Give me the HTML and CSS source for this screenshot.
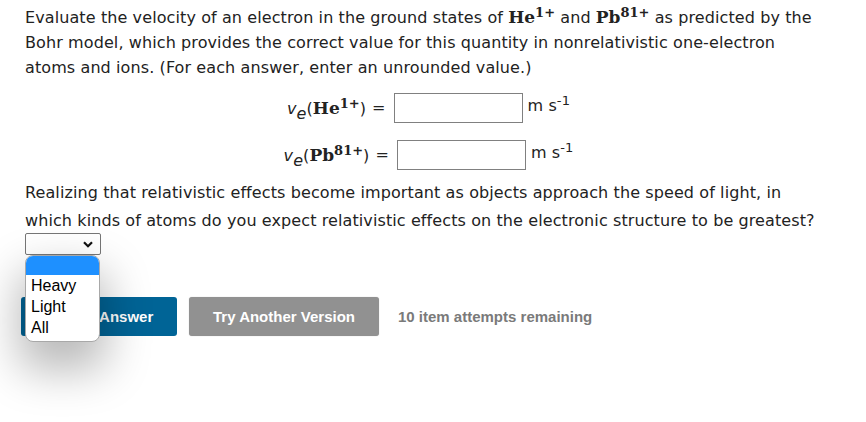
FILE: index.html
```html
<!DOCTYPE html>
<html>
<head>
<meta charset="utf-8">
<link rel="stylesheet" href="styles.css">
</head>
<body>
<div class="page">
  <p class="para">Evaluate the velocity of an electron in the ground states of <b class="chem">He<sup>1+</sup></b> and <b class="chem">Pb<sup>81+</sup></b> as predicted by the Bohr model, which provides the correct value for this quantity in nonrelativistic one-electron atoms and ions. (For each answer, enter an unrounded value.)</p>

  <div class="eqs">
    <div class="eq eq1">
      <span class="lhs"><i>v</i><sub><i>e</i></sub>(<b class="chem">He<sup>1+</sup></b>)</span>
      <span class="equals">=</span>
      <span class="box"></span>
      <span class="unit">m s<sup>-1</sup></span>
    </div>
    <div class="eq eq2">
      <span class="lhs"><i>v</i><sub><i>e</i></sub>(<b class="chem">Pb<sup>81+</sup></b>)</span>
      <span class="equals">=</span>
      <span class="box"></span>
      <span class="unit">m s<sup>-1</sup></span>
    </div>
  </div>

  <p class="para para2">Realizing that relativistic effects become important as objects approach the speed of light, in which kinds of atoms do you expect relativistic effects on the electronic structure to be greatest?</p>

  <div class="selectwrap">
    <div class="select">
      <svg class="chev" width="10" height="7" viewBox="0 0 10 7"><path d="M1 1.2 L5 5.2 L9 1.2" fill="none" stroke="#111" stroke-width="2.2"/></svg>
    </div>
    <div class="menu">
      <div class="opt sel"></div>
      <div class="opt">Heavy</div>
      <div class="opt">Light</div>
      <div class="opt">All</div>
    </div>
  </div>

  <div class="actions">
    <button class="btn submit">Submit Answer</button>
    <button class="btn another">Try Another Version</button>
    <span class="attempts">10 item attempts remaining</span>
  </div>
</div>
</body>
</html>
```

FILE: styles.css
```css
html, body {
  margin: 0;
  padding: 0;
  background: #fff;
}
body {
  min-height: 422px;
}
.page {
  padding: 5px 44px 0 25px;
  font-family: "DejaVu Sans", Verdana, sans-serif;
  font-size: 16px;
  letter-spacing: 0.1px;
  color: #222;
}
.para {
  margin: 0;
  line-height: 25px;
}
.chem {
  font-family: "DejaVu Serif", serif;
  font-weight: bold;
  font-size: 17px;
  letter-spacing: 0;
}
.chem sup {
  font-size: 13px;
  vertical-align: 6px;
  line-height: 0;
}
.eqs {
  display: flex;
  flex-direction: column;
  align-items: center;
  gap: 16px;
  margin-top: 12px;
  margin-right: -10px;
}
.eq {
  display: flex;
  align-items: center;
  height: 31px;
}
.lhs {
  white-space: nowrap;
}
.lhs i {
  font-style: italic;
}
.lhs sub {
  font-size: 16px;
  vertical-align: -5px;
  line-height: 0;
}
.equals {
  margin: 0 8px 0 6px;
}
.box {
  display: block;
  width: 127px;
  height: 28px;
  border: 1px solid #808080;
  background: #fff;
}
.unit {
  margin-left: 5px;
  white-space: nowrap;
  position: relative;
  top: -2px;
}
.unit sup {
  font-size: 13px;
  vertical-align: 6px;
  line-height: 0;
}
.para2 {
  margin-top: 9px;
  line-height: 28px;
}
.selectwrap {
  position: relative;
  height: 22px;
  margin-top: -2px;
}
.select {
  box-sizing: border-box;
  width: 76px;
  height: 22px;
  border: 1px solid #767676;
  border-radius: 2px;
  background: #fff;
  display: flex;
  align-items: center;
  justify-content: flex-end;
}
.chev {
  margin-right: 7px;
}
.menu {
  position: absolute;
  left: 0;
  top: 22px;
  width: 73px;
  background: #fff;
  border: 1px solid #a8a8a8;
  border-radius: 8px;
  overflow: hidden;
  box-shadow: 0 22px 45px 6px rgba(0, 0, 0, 0.28);
  z-index: 10;
  font-family: "Liberation Sans", Arial, sans-serif;
  font-size: 16px;
  letter-spacing: 0;
  color: #000;
  padding-bottom: 3px;
}
.opt {
  height: 21px;
  line-height: 21px;
  padding-left: 5px;
}
.opt.sel {
  background: #1e90ff;
  height: 19px;
}
.actions {
  display: flex;
  align-items: center;
  margin-top: 42px;
  margin-left: -4px;
  letter-spacing: 0;
}
.btn {
  height: 39px;
  border: none;
  border-radius: 3px;
  color: #fff;
  font-family: "Liberation Sans", Arial, sans-serif;
  font-weight: bold;
  font-size: 15px;
  padding: 0;
}
.submit {
  width: 156px;
  background: #006496;
}
.another {
  width: 190px;
  margin-left: 12px;
  background: #919191;
  box-shadow: 0 0 1px rgba(0,0,0,0.3);
}
.attempts {
  margin-left: 19px;
  font-family: "Liberation Sans", Arial, sans-serif;
  font-weight: bold;
  font-size: 15px;
  color: #7a7a7a;
}
```
